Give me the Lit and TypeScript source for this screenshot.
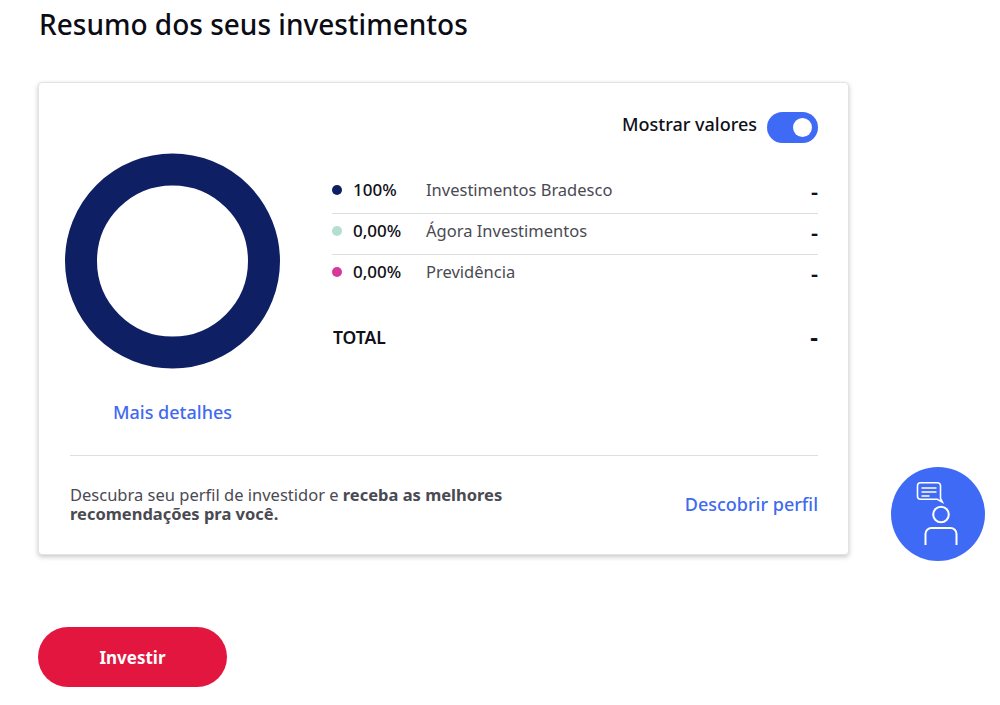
import { LitElement, html, css } from 'lit';
import { customElement } from 'lit/decorators.js';

const rows = [
  { color: '#0f1f63', pct: '100%', name: 'Investimentos Bradesco' },
  { color: '#b2dfd0', pct: '0,00%', name: 'Ágora Investimentos' },
  { color: '#d6389b', pct: '0,00%', name: 'Previdência' },
];

@customElement('app-root')
export class AppRoot extends LitElement {
  static styles = css`
    :host {
      display: block;
      position: relative;
      height: 705px;
      overflow: hidden;
      background: #fff;
      font-family: "Noto Sans", "Open Sans", sans-serif;
      color: #101018;
    }
    .page {
      padding: 5px 0 0 38px;
    }
    h1 {
      margin: 0 0 0 1px;
      font-size: 28px;
      line-height: 38px;
      font-weight: 500;
      color: #0c0c14;
    }
    .card {
      box-sizing: border-box;
      width: 811px;
      height: 473px;
      margin-top: 39px;
      padding: 0 30px 0 31px;
      background: #fff;
      border: 1px solid #e3e3e3;
      border-radius: 4px;
      box-shadow: 0 2px 5px rgba(0, 0, 0, 0.22);
    }
    .top {
      display: flex;
      gap: 52px;
      height: 372px;
      margin-left: -5px;
    }
    .chart {
      width: 215px;
      padding-top: 70px;
      flex: none;
      text-align: center;
    }
    .donut {
      display: block;
      width: 215px;
      height: 216px;
    }
    .more {
      margin-top: 31px;
      font-size: 18px;
      line-height: 24px;
      font-weight: 500;
      color: #3f6af0;
    }
    .summary {
      flex: 1;
      padding-top: 29px;
    }
    .toggle-row {
      display: flex;
      justify-content: flex-end;
      align-items: flex-start;
      gap: 10px;
      height: 61px;
      font-size: 18px;
      line-height: 24px;
      font-weight: 500;
    }
    .toggle {
      position: relative;
      width: 51px;
      height: 31px;
      border-radius: 16px;
      background: #3f6af5;
    }
    .toggle::after {
      content: '';
      position: absolute;
      top: 6px;
      right: 6px;
      width: 19px;
      height: 19px;
      border-radius: 50%;
      background: #fff;
    }
    .row {
      display: flex;
      align-items: center;
      box-sizing: border-box;
      height: 41px;
      padding-bottom: 7px;
      border-bottom: 1px solid #dedede;
      font-size: 16.5px;
    }
    .row.last {
      border-bottom: 0;
      padding-bottom: 8px;
    }
    .dot {
      width: 10px;
      height: 10px;
      margin-right: 11px;
      border-radius: 50%;
      flex: none;
    }
    .pct {
      width: 73px;
      font-size: 17px;
      font-weight: 500;
      flex: none;
    }
    .name {
      flex: 1;
      color: #4a4a52;
    }
    .dash {
      margin-top: 2px;
      font-size: 22px;
      line-height: 20px;
      font-weight: 600;
    }
    .total {
      display: flex;
      justify-content: space-between;
      align-items: center;
      margin-top: 29px;
      padding-left: 1px;
      font-size: 17.5px;
      line-height: 24px;
      font-weight: 600;
    }
    .total .dash {
      margin-top: 0;
      font-size: 24px;
      font-weight: 700;
    }
    .bottom {
      display: flex;
      align-items: center;
      justify-content: space-between;
      height: 99px;
      padding-bottom: 2px;
      box-sizing: border-box;
      border-top: 1px solid #dedede;
    }
    .bottom p {
      margin: 0;
      width: 460px;
      font-size: 16.5px;
      line-height: 19px;
      color: #4a4a52;
    }
    .bottom b {
      font-weight: 700;
    }
    .discover {
      font-size: 18px;
      font-weight: 500;
      color: #3f6af0;
    }
    .invest {
      display: block;
      width: 189px;
      height: 60px;
      margin-top: 72px;
      border: 0;
      border-radius: 30px;
      background: #e2163f;
      color: #fff;
      font: 700 17px "Noto Sans", sans-serif;
    }
    .chat {
      position: absolute;
      left: 891px;
      top: 467px;
      width: 94px;
      height: 94px;
      border-radius: 50%;
      background: #3f6af5;
    }
    .chat svg {
      display: block;
    }
  `;

  render() {
    return html`
      <div class="page">
        <h1>Resumo dos seus investimentos</h1>
        <section class="card">
          <div class="top">
            <div class="chart">
              <svg class="donut" viewBox="0 0 215 216">
                <circle cx="107.5" cy="108" r="91.5" fill="none" stroke="#0f1f63" stroke-width="32"></circle>
              </svg>
              <div class="more">Mais detalhes</div>
            </div>
            <div class="summary">
              <div class="toggle-row">
                <span>Mostrar valores</span>
                <div class="toggle"></div>
              </div>
              <div>
                ${rows.map(
                  (r, i) => html`
                    <div class="row ${i === rows.length - 1 ? 'last' : ''}">
                      <i class="dot" style="background:${r.color}"></i>
                      <span class="pct">${r.pct}</span>
                      <span class="name">${r.name}</span>
                      <span class="dash">-</span>
                    </div>
                  `
                )}
              </div>
              <div class="total"><span>TOTAL</span><span class="dash">-</span></div>
            </div>
          </div>
          <div class="bottom">
            <p>Descubra seu perfil de investidor e <b>receba as melhores recomendações pra você.</b></p>
            <span class="discover">Descobrir perfil</span>
          </div>
        </section>
        <button class="invest">Investir</button>
      </div>
      <div class="chat">
        <svg width="94" height="94" viewBox="0 0 94 94" fill="none" stroke="#fff" stroke-width="1.6">
          <path d="M29.5 15.8h17a3 3 0 0 1 3 3v12.5l1.8 3.7-5-2.8H29.5a3 3 0 0 1-3-3V18.800a3 3 0 0 1 3-3z"></path>
          <path d="M30.500 21h15M30.500 25h15M30.500 29h8"></path>
          <circle cx="50" cy="47.500" r="7.800" stroke-width="2"></circle>
          <path d="M34.500 78V67a6 6 0 0 1 6-6h19a6 6 0 0 1 6 6v11" stroke-width="2"></path>
        </svg>
      </div>
    `;
  }
}
